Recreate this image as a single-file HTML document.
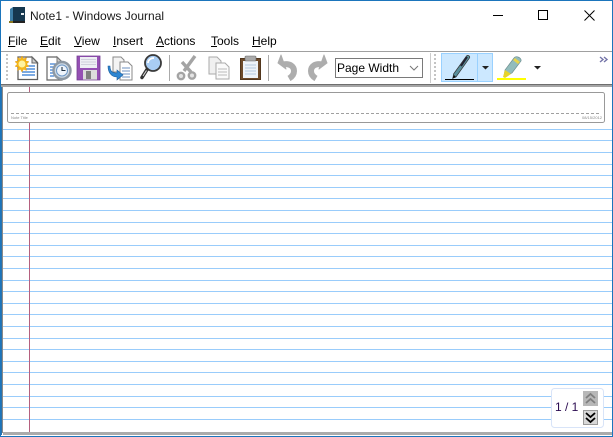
<!DOCTYPE html>
<html><head><meta charset="utf-8"><style>
html,body{margin:0;padding:0;background:#fff}
body{width:613px;height:437px;overflow:hidden;position:relative;font-family:"Liberation Sans",sans-serif}
svg{position:absolute;left:0;top:0}
.t{position:absolute;font-size:12px;line-height:14px;color:#000;white-space:nowrap}
.m{top:34px}
u{text-decoration:underline}
</style></head><body>
<svg width="613" height="437" viewBox="0 0 613 437" shape-rendering="crispEdges">
<g fill="#99ccfb">
<rect x="3" y="129" width="609" height="1"/><rect x="3" y="140" width="609" height="1"/><rect x="3" y="152" width="609" height="1"/><rect x="3" y="164" width="609" height="1"/><rect x="3" y="175" width="609" height="1"/><rect x="3" y="187" width="609" height="1"/><rect x="3" y="198" width="609" height="1"/><rect x="3" y="210" width="609" height="1"/><rect x="3" y="222" width="609" height="1"/><rect x="3" y="233" width="609" height="1"/><rect x="3" y="245" width="609" height="1"/><rect x="3" y="256" width="609" height="1"/><rect x="3" y="268" width="609" height="1"/><rect x="3" y="280" width="609" height="1"/><rect x="3" y="291" width="609" height="1"/><rect x="3" y="303" width="609" height="1"/><rect x="3" y="314" width="609" height="1"/><rect x="3" y="326" width="609" height="1"/><rect x="3" y="338" width="609" height="1"/><rect x="3" y="349" width="609" height="1"/><rect x="3" y="361" width="609" height="1"/><rect x="3" y="372" width="609" height="1"/><rect x="3" y="384" width="609" height="1"/><rect x="3" y="396" width="609" height="1"/><rect x="3" y="407" width="609" height="1"/><rect x="3" y="419" width="609" height="1"/>
</g>
<rect x="29" y="87" width="1" height="346" fill="#b5607f"/>
<!-- window frame -->
<rect x="0" y="0" width="613" height="1" fill="#1b75bc"/>
<rect x="0" y="0" width="1" height="437" fill="#1b75bc"/>
<rect x="612" y="0" width="1" height="437" fill="#1b75bc"/>
<rect x="0" y="436" width="613" height="1" fill="#1b75bc"/>
<rect x="1" y="86" width="1" height="349" fill="#2a72ad"/>
<rect x="2" y="86" width="1" height="347" fill="#8a8a8a"/>
<rect x="3" y="432" width="609" height="3" fill="#ababab"/>
<!-- toolbar -->
<rect x="1" y="51" width="611" height="1" fill="#a0a0a0"/>
<rect x="1" y="84" width="611" height="1" fill="#6e6e6e"/>
<rect x="1" y="85" width="611" height="2" fill="#a5a5a5"/>
<g fill="#c4c4c4">
<rect x="6" y="54" width="2" height="2"/><rect x="6" y="58" width="2" height="2"/><rect x="6" y="62" width="2" height="2"/><rect x="6" y="66" width="2" height="2"/><rect x="6" y="70" width="2" height="2"/><rect x="6" y="74" width="2" height="2"/><rect x="6" y="78" width="2" height="2"/>
<rect x="434" y="54" width="2" height="2"/><rect x="434" y="58" width="2" height="2"/><rect x="434" y="62" width="2" height="2"/><rect x="434" y="66" width="2" height="2"/><rect x="434" y="70" width="2" height="2"/><rect x="434" y="74" width="2" height="2"/><rect x="434" y="78" width="2" height="2"/>
</g>
<rect x="169" y="55" width="1" height="26" fill="#aaa"/>
<rect x="268" y="55" width="1" height="26" fill="#aaa"/>
<rect x="430" y="53" width="1" height="30" fill="#ccc"/>
<!-- title box -->
<rect x="7.5" y="92.5" width="597" height="30" rx="2" fill="#fff" stroke="#999" shape-rendering="auto"/>
<line x1="11" x2="601" y1="113.5" y2="113.5" stroke="#a0a0a0" stroke-dasharray="3 2"/>
<!-- window controls -->
<rect x="493" y="15" width="10" height="1" fill="#000"/>
<rect x="538.5" y="10.5" width="9" height="9" fill="none" stroke="#000"/>
<path d="M584.5 10.5l10 10M594.5 10.5l-10 10" stroke="#000" fill="none" shape-rendering="auto"/>
<g shape-rendering="auto">
<!-- app icon -->
<path d="M13 7h12v15H13z" fill="#16384f"/><path d="M13 7l-3 2v12l3 1z" fill="#3d7ea6"/><path d="M10 21h15v2H10z" fill="#222"/><path d="M9 21h4v2H9z" fill="#8a7820"/><rect x="21" y="13" width="3" height="2" fill="#e8eef2"/>
<!-- new note -->
<path d="M18 57h14l5.500 5.500V79.500H18z" fill="#fff" stroke="#5f5f5f" stroke-width="1.300"/><path d="M32 57v6h5.500z" fill="#cfcfcf" stroke="#666"/>
<path d="M26 66h9M26 69h9M22 72h13M22 75h13" stroke="#2f78d0" stroke-width="1.300"/>
<path d="M22 56l1.500 3 3-1.500-.8 3.500 3.300.7-2.500 2.300 2.500 2.300-3.300.7.800 3.500-3-1.500-1.500 3-1.500-3-3 1.500.8-3.500-3.300-.7 2.500-2.300-2.500-2.300 3.300-.7-.8-3.500 3 1.500z" fill="#f5b91c" stroke="#e59a10" stroke-width=".5"/><circle cx="22" cy="64" r="3.500" fill="#fff3a0"/>
<!-- recent -->
<path d="M47 57h10l5 5v18H47z" fill="#fff" stroke="#666" stroke-width="1.200"/><path d="M57 57v5h5z" fill="#ccc" stroke="#777"/><path d="M50 64h7M50 67h5M50 70h3M50 73h3M50 76h4" stroke="#3f7fd0" stroke-width="1.200"/>
<circle cx="62" cy="70.500" r="8.500" fill="#cdd9e4" stroke="#8d98a3" stroke-width="2.400"/><circle cx="62" cy="70.500" r="5.500" fill="#eef4fb" stroke="#6d97c6"/><path d="M62 67V70.500h3.500" stroke="#234" fill="none" stroke-width="1.100"/>
<!-- save -->
<path d="M77 56h23v24H77z" fill="#9550b4"/><rect x="80" y="57" width="17" height="11" fill="#eeeef4"/><path d="M81 59.500h15M81 62h15M81 64.500h15" stroke="#d0d0dc"/><rect x="83" y="70" width="14" height="10" fill="#dcdcdc"/><rect x="86" y="71" width="5" height="8" fill="#7f7f7f"/><path d="M77 56h23v24H77z" fill="none" stroke="#733f92" stroke-width=".8"/>
<!-- send -->
<path d="M113 57h8l3 3v12h-11z" fill="#f4f4f4" stroke="#8a8a8a"/><path d="M120 62h8l4 4v14h-12V62z" fill="#fff" stroke="#8a8a8a"/><path d="M122 68h8M122 71h8M122 74h8M122 77h8" stroke="#6d92c0" stroke-width="1.100"/>
<path d="M110 66c0 5 2 7 7 7v-3l6 5-6 5v-3c-6 0-9-5-9-11z" fill="#2e86d1" stroke="#1c5e9e" stroke-width=".6"/>
<!-- search -->
<circle cx="153" cy="63" r="8" fill="#a9cdf4" stroke="#3a3a3a" stroke-width="1.800"/><path d="M148 63c0-3 3-5 6-5" stroke="#fff" fill="none" stroke-width="1.700"/>
<path d="M147 69.500L142 77.500" stroke="#333" stroke-width="3.500" stroke-linecap="round"/><path d="M146.500 70.500L143 76" stroke="#ddd" stroke-width="1"/>
<!-- cut (gray) -->
<path d="M195 56l-11 15M182 62l9 10" stroke="#a4a4a4" stroke-width="3.400" fill="none"/><circle cx="181" cy="76" r="3.200" fill="#e4e4e4" stroke="#a4a4a4" stroke-width="2.400"/><circle cx="192" cy="75.500" r="3.200" fill="#e4e4e4" stroke="#a4a4a4" stroke-width="2.400"/>
<!-- copy -->
<path d="M209 57h8l4 4v13h-12z" fill="#f0f0f0" stroke="#aaa"/><path d="M216 63h9l4 4v12h-13z" fill="#fafafa" stroke="#aaa"/><path d="M218 69h9M218 72h9M218 75h9" stroke="#bbb"/>
<!-- paste -->
<rect x="240.500" y="58.500" width="20" height="21" fill="#6c4a2a" stroke="#51361d"/><rect x="243" y="61" width="15" height="17" fill="#eef3f8"/><path d="M245 65h11M245 68h11M245 71h11M245 74h11" stroke="#b4c8de"/><rect x="245" y="56" width="11" height="5" rx="1" fill="#aaa" stroke="#666" stroke-width=".6"/>
<!-- undo -->
<path d="M283 64.500c7-1.500 11 2 11 6.500 0 3-1.500 5.500-5 7.500" fill="none" stroke="#adadad" stroke-width="6"/><path d="M278 63l3-8 5 14z" fill="#adadad" stroke="#adadad" stroke-linejoin="round"/>
<!-- redo -->
<path d="M322 64.500c-7-1.500-11 2-11 6.500 0 3 1.500 5.500 5 7.500" fill="none" stroke="#adadad" stroke-width="6"/><path d="M327 63l-3-8-5 14z" fill="#adadad" stroke="#adadad" stroke-linejoin="round"/>
</g>
<!-- combo -->
<rect x="335.500" y="58.500" width="87" height="19" fill="#fff" stroke="#7a7a7a"/>
<path d="M410 66l4 4 4-4" fill="none" stroke="#777" shape-rendering="auto"/>
<!-- pen button -->
<rect x="441.500" y="53.500" width="51" height="28" fill="#cce8ff" stroke="#99d1ff"/>
<rect x="477" y="54" width="1" height="27" fill="#99d1ff"/>
<rect x="445" y="79" width="29" height="1" fill="#000"/>
<g shape-rendering="auto">
<path d="M453 78l3-1 13.500-19c1-2-2-3.500-3-2l-13 18z" fill="#5a8f9c" stroke="#333" stroke-width=".7"/><path d="M461 66l6-9" stroke="#223" stroke-width="2"/><path d="M452 79l2-4 2 2z" fill="#111"/>
<path d="M514 58l-9 12-1 6 8-3 9-12c1-3-5-6-7-3z" fill="#92bcbc" stroke="#6f8f90" stroke-width=".7"/><path d="M515 58l5 4-2 2-5-4z" fill="#e8d44a"/><path d="M505 70l6 4-6 4-2-1z" fill="#e6d32a"/>
<path d="M482 66h7l-3.500 3.500zM534 66h7l-3.500 3.500z" fill="#222"/>
<path d="M600 57l3 2.500-3 2.500M604 57l3 2.500-3 2.500" fill="none" stroke="#7474a8" stroke-width="1.400"/>
</g>
<rect x="497" y="78" width="29" height="2" fill="#ff0"/>
<!-- page nav -->
<rect x="551.500" y="388.500" width="52" height="39" rx="3" fill="#fff" stroke="#d8e4f8" shape-rendering="auto"/>
<rect x="583" y="391" width="15" height="15" fill="#b8b8b8"/>
<rect x="583.500" y="410.500" width="14" height="14" fill="#d8d8d8" stroke="#9a9a9a"/>
<g shape-rendering="auto" fill="none">
<path d="M586 398l4.500-4 4.500 4M586 403l4.500-4 4.500 4" stroke="#7f7f7f" stroke-width="1.800"/>
<path d="M586 413l4.500 4 4.500-4M586 418l4.500 4 4.500-4" stroke="#000" stroke-width="1.800"/>
</g>
</svg>
<div class="t" style="left:30px;top:9px;color:#1a1a1a">Note1 - Windows Journal</div>
<div class="t m" style="left:8px"><u>F</u>ile</div>
<div class="t m" style="left:40px"><u>E</u>dit</div>
<div class="t m" style="left:74px"><u>V</u>iew</div>
<div class="t m" style="left:113px"><u>I</u>nsert</div>
<div class="t m" style="left:156px"><u>A</u>ctions</div>
<div class="t m" style="left:211px"><u>T</u>ools</div>
<div class="t m" style="left:252px"><u>H</u>elp</div>
<div class="t" style="left:337px;top:61px">Page Width</div>
<div class="t" style="left:11px;top:115px;font-size:4px;line-height:5px;color:#888">Note Title</div>
<div class="t" style="left:582px;top:115px;font-size:4px;line-height:5px;color:#888">08/15/2012</div>
<div class="t" style="left:555px;top:400px;color:#2a0a50">1 / 1</div>
</body></html>
